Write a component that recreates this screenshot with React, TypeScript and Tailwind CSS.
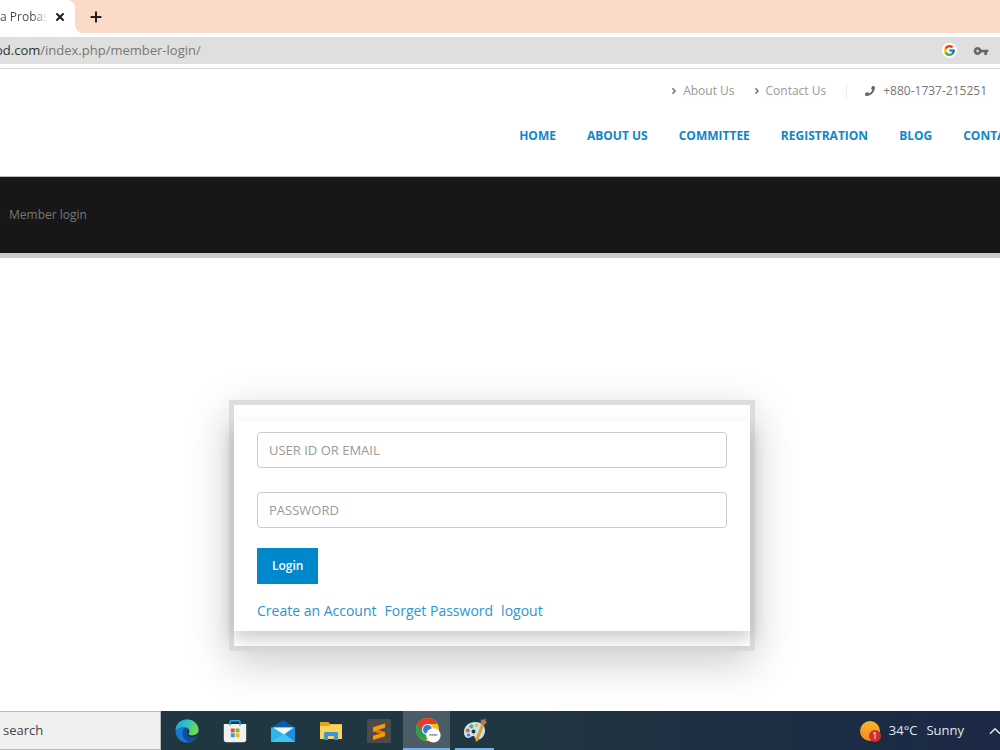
import { ChevronUp, Plus, X } from "lucide-react";
import { FaAngleRight, FaPhone } from "react-icons/fa";
import { FcGoogle } from "react-icons/fc";
import { MdVpnKey } from "react-icons/md";

const navLinks = ["HOME", "ABOUT US", "COMMITTEE", "REGISTRATION", "BLOG", "CONTACT"];

const accountLinks = ["Create an Account", "Forget Password", "logout"];

function BrowserBar() {
  return (
    <div className="shrink-0 border-b border-[#d5d5d5] bg-white">
      <div className="flex h-[33px] bg-white">
        <div className="flex w-[75px] shrink-0 items-center bg-[#fcdac8]">
          <div className="flex h-full w-full items-center overflow-hidden rounded-tr-lg bg-white">
            <span className="w-[46px] whitespace-nowrap bg-linear-to-r from-[#444] from-70% to-[#ddd] bg-clip-text text-xs text-transparent">
              a Probas
            </span>
            <button type="button" aria-label="Close tab" className="ml-2 text-[#222]">
              <X className="h-3 w-3 stroke-[4]" />
            </button>
          </div>
        </div>
        <div className="flex flex-1 items-center rounded-bl-lg bg-[#fcdac8] pl-[13px]">
          <button type="button" aria-label="New tab" className="text-[#222]">
            <Plus className="h-4 w-4 stroke-3" />
          </button>
        </div>
      </div>
      <div className="mt-1 mb-1 flex h-[27px] items-center justify-between overflow-hidden bg-[#dfdfdf] pr-[11px]">
        <span className="-ml-[5px] text-[13px] text-[#777]">
          <span className="text-[#333]">od.com</span>/index.php/member-login/
        </span>
        <div className="flex items-center gap-4">
          <span className="rounded-full bg-white p-px">
            <FcGoogle className="h-[13px] w-[13px]" />
          </span>
          <MdVpnKey className="h-4 w-4 text-[#666]" />
        </div>
      </div>
    </div>
  );
}

function SiteHeader() {
  return (
    <header className="flex h-[108px] shrink-0 flex-col overflow-hidden border-b border-[#bbb] bg-white">
      <div className="mt-2 flex h-7 items-center justify-end pr-[13px] text-xs text-[#999]">
        <a href="#about" className="flex items-center gap-[5px]">
          <FaAngleRight className="h-[10px] w-2 text-[#777]" />
          About Us
        </a>
        <a href="#contact" className="ml-[18px] flex items-center gap-[5px]">
          <FaAngleRight className="h-[10px] w-2 text-[#777]" />
          Contact Us
        </a>
        <a
          href="tel:+8801737215251"
          className="ml-5 flex h-4 items-center gap-2 border-l border-[#eee] pl-[18px] text-[#777]"
        >
          <FaPhone className="h-[10px] w-[10px] text-[#666]" />
          +880-1737-215251
        </a>
      </div>
      <nav className="-mr-5 mt-[23px] flex justify-end gap-[31px] text-xs font-bold text-[#0f86c8]">
        {navLinks.map((label) => (
          <a key={label} href="#nav">
            {label}
          </a>
        ))}
      </nav>
    </header>
  );
}

function LoginForm() {
  return (
    <div className="w-[526px] max-w-full border-[5px] border-[#dcdcdc] bg-white pt-4 pb-[15px] shadow-[0_12px_40px_rgba(0,0,0,0.2)]">
      <form
        className="bg-white px-[23px] pt-[11px] pb-[10px] shadow-[0_8px_16px_rgba(0,0,0,0.2)]"
        onSubmit={(event) => event.preventDefault()}
      >
        <input
          type="text"
          aria-label="User ID or email"
          placeholder="USER ID OR EMAIL"
          className="block h-9 w-full rounded-[4px] border border-[#ccc] px-[11px] text-[13px] placeholder:text-[#999]"
        />
        <input
          type="password"
          aria-label="Password"
          placeholder="PASSWORD"
          className="mt-6 block h-9 w-full rounded-[4px] border border-[#ccc] px-[11px] text-[13px] placeholder:text-[#999]"
        />
        <button type="submit" className="mt-5 h-9 bg-[#0088cc] px-[15px] text-xs font-semibold text-white">
          Login
        </button>
        <div className="mt-[17px] flex gap-2 text-sm text-[#2c95d0]">
          {accountLinks.map((label) => (
            <a key={label} href="#account">
              {label}
            </a>
          ))}
        </div>
      </form>
    </div>
  );
}

function EdgeIcon() {
  return (
    <svg viewBox="0 0 24 24" className="h-6 w-6">
      <defs>
        <linearGradient id="edge-top" x1="0" y1="0" x2="1" y2="0.3">
          <stop offset="0" stopColor="#1d9de0" />
          <stop offset="0.5" stopColor="#2fc0c4" />
          <stop offset="1" stopColor="#6edb4c" />
        </linearGradient>
      </defs>
      <circle cx="12" cy="12" r="11.5" fill="#1479cf" />
      <path d="M.6 11C1 4.500 6 .5 12 .5c7 0 11.500 5 11.500 10 0 4-3 6-6.500 6-3 0-4-1.200-3.300-2.200 2-2.500.8-6.300-4-6.300-4 0-7.500 1.500-9.100 3z" fill="url(#edge-top)" />
      <path d="M9 9.500c-2.500 3-2.300 9 3 12.500 1.500 1 3.500 1.200 5.300.3C20 21 21.500 19 22.500 17c-3 2-8.500 2-10.500-1-1.400-2.200-.7-5 .5-6.300C11.500 9 10 8.800 9 9.500z" fill="#0c4f9e" />
      <path d="M13.700 14.300c-.7 1 .3 2.200 3.300 2.200 2.500 0 4.500-1 5.600-2.700l.2 3c-3 2.500-8.300 2.400-10.500-.5-1.500-2-.8-5 .2-6.400 2 1 2.400 3 1.200 4.400z" fill="#203640" />
    </svg>
  );
}

function StoreIcon() {
  return (
    <svg viewBox="0 0 24 24" className="h-6 w-6">
      <path d="M7 6V3.200C7 2.300 7.500 1.700 8.400 1.700h7.200c.9 0 1.400.6 1.400 1.500V6" fill="none" stroke="#2aa5e8" strokeWidth="1.600" />
      <path d="M.8 5h22.400v15.500c0 1.700-1 2.700-2.700 2.700h-17C1.800 23.200.8 22.200.8 20.500z" fill="#f1f1f1" />
      <path d="M7 5v1.500M17 5v1.500" stroke="#2aa5e8" strokeWidth="1.600" />
      <path d="M7.800 9.500h3.900v3.900H7.800z" fill="#e8502b" />
      <path d="M12.600 9.500h3.900v3.900h-3.900z" fill="#7db928" />
      <path d="M7.800 14.300h3.900v3.900H7.800z" fill="#27a3e3" />
      <path d="M12.600 14.300h3.900v3.900h-3.900z" fill="#fcb814" />
    </svg>
  );
}

function MailIcon() {
  return (
    <svg viewBox="0 0 24 24" className="h-6 w-6">
      <path d="M0 8.500 12 1l12 7.500V23H0z" fill="#0b5cab" />
      <path d="M0 8.500h24V23H0z" fill="#2fb4ec" />
      <path d="M24 8.500V23L11 15z" fill="#1d8fdc" />
      <path d="M0 23 13 14.500 24 23z" fill="#41c5f3" />
      <path d="M2 8.500h20.500L13 15.500z" fill="#f3f8fc" />
    </svg>
  );
}

function FolderIcon() {
  return (
    <svg viewBox="0 0 24 24" className="h-6 w-6">
      <path d="M1 3h8.500l1.500 2h12v5H1z" fill="#e9a21b" />
      <path d="M1 7h9l1.500-1.500H23V20H1z" fill="#fbd45c" />
      <path d="M5 21v-6.500c0-1 .6-1.600 1.600-1.600h10.800c1 0 1.600.6 1.600 1.600V21h-4v-4H9v4z" fill="#3e94d4" />
    </svg>
  );
}

function SublimeIcon() {
  return (
    <svg viewBox="0 0 24 24" className="h-6 w-6">
      <rect width="24" height="24" rx="1.500" fill="#4b4b4b" />
      <path d="M18 4.500v4.300l-7.300 2.300L18 13.300v4L6 21v-4.300l7.300-2.200L6 12.300V8.200z" fill="#ff9800" />
      <path d="m6 12.300 7.300 2.200L18 13.300l-7.300-2.200z" fill="#e07c00" />
    </svg>
  );
}

function ChromeIcon() {
  return (
    <svg viewBox="0 0 26 26" className="h-[26px] w-[26px]">
      <circle cx="12.500" cy="12.500" r="11.500" fill="#fbc116" />
      <path d="M12.500 12.500 2.500 6.700a11.500 11.500 0 0 0 8.200 17.200L16.500 13.500z" fill="#2c9f48" />
      <path d="M2.500 6.700A11.500 11.500 0 0 1 22.500 7h-10l-5 8z" fill="#e33b2e" />
      <circle cx="12.500" cy="12.500" r="5.500" fill="#fff" />
      <circle cx="12.500" cy="12.500" r="4.500" fill="#3478e5" />
      <circle cx="18.400" cy="18.400" r="7.200" fill="#fff" />
      <path d="M14.500 17.800h8" stroke="#8d77b8" strokeWidth="1.800" strokeDasharray="1.500 .4" />
    </svg>
  );
}

function PaintIcon() {
  return (
    <svg viewBox="0 0 24 24" className="h-6 w-6">
      <path d="M1 14C1 8 6 4 12.500 4S22 8 22 12.500c0 6-4.500 9.500-8 9-2.500-.4-1.500-3-3.500-3.500-2.200-.5-3 2.500-5.800 2C2 19.500 1 17 1 14z" fill="#c9e2ee" />
      <circle cx="4.800" cy="12.500" r="1.900" fill="#df5840" />
      <circle cx="8.300" cy="8.500" r="1.900" fill="#58ad50" />
      <circle cx="13.500" cy="7.300" r="1.800" fill="#e8bd36" />
      <circle cx="5.500" cy="17" r="1.600" fill="#3d78c8" />
      <circle cx="10.500" cy="13.500" r="1.900" fill="#203640" />
      <path d="m18 7 3 .8-6 15.200-2.500.4V21z" fill="#e59b3c" />
      <path d="m17.500 6 .5-5 1.800 1 2.700-1.500L22.500 3 24 4l-3.500 4z" fill="#b57a4a" />
    </svg>
  );
}

const pinnedApps = [
  { name: "Edge", icon: <EdgeIcon /> },
  { name: "Store", icon: <StoreIcon /> },
  { name: "Mail", icon: <MailIcon /> },
  { name: "Files", icon: <FolderIcon /> },
  { name: "Sublime", icon: <SublimeIcon /> },
];

function Taskbar() {
  return (
    <footer className="flex h-[39px] shrink-0 overflow-hidden bg-linear-to-r from-[#203640] from-50% to-[#1b2846]">
      <input
        type="text"
        aria-label="Search"
        placeholder="search"
        className="w-[161px] shrink-0 border-y border-r border-[#bbb] bg-[#f0f0f0] pl-[3px] text-[13px] placeholder:text-[#444]"
      />
      <div className="ml-[2px] flex">
        {pinnedApps.map(({ name, icon }) => (
          <button key={name} type="button" aria-label={name} className="flex w-12 items-center justify-center">
            {icon}
          </button>
        ))}
        <button
          type="button"
          aria-label="Chrome"
          className="flex w-[47px] items-center justify-center border-b-2 border-[#76b0e8] bg-[#4b5c66] pl-[2px]"
        >
          <ChromeIcon />
        </button>
        <button
          type="button"
          aria-label="Paint"
          className="ml-[5px] flex w-[39px] items-center justify-center border-b-2 border-[#76b0e8]"
        >
          <PaintIcon />
        </button>
      </div>
      <div className="ml-auto flex items-center text-[13px] text-[#e4e8ee]">
        <span className="relative mr-[9px] h-5 w-5 rounded-full bg-linear-to-b from-[#f8b62c] to-[#ee8a22]">
          <span className="absolute -right-px -bottom-px flex h-3 w-3 items-center justify-center rounded-full bg-[#cf3022] text-[9px] text-white">
            1
          </span>
        </span>
        <span>34°C</span>
        <span className="ml-[9px]">Sunny</span>
        <button type="button" aria-label="Show hidden icons" className="-mr-1 ml-[22px]">
          <ChevronUp className="h-[18px] w-[18px]" />
        </button>
      </div>
    </footer>
  );
}

export default function App() {
  return (
    <div className="flex min-h-screen flex-col overflow-hidden bg-white font-['Open_Sans',sans-serif]">
      <BrowserBar />
      <SiteHeader />
      <section className="flex h-[81px] shrink-0 items-center overflow-hidden border-b-[5px] border-[#ccc] bg-[#171717] text-xs text-[#777]">
        <span className="-ml-[3px] w-3">›</span>
        <span>Member login</span>
      </section>
      <main className="flex flex-1 flex-col items-center overflow-hidden pt-[142px] pr-4 pb-[60px]">
        <LoginForm />
      </main>
      <Taskbar />
    </div>
  );
}
